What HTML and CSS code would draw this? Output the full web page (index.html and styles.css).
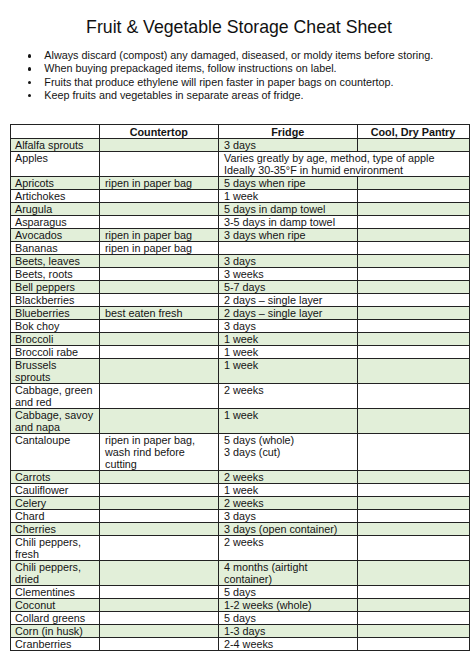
FILE: index.html
```html
<!DOCTYPE html>
<html lang="en">
<head>
<meta charset="utf-8">
<title>Fruit &amp; Vegetable Storage Cheat Sheet</title>
<link rel="stylesheet" href="styles.css">
</head>
<body>
<main class="sheet">
  <h1 class="title">Fruit &amp; Vegetable Storage Cheat Sheet</h1>
  <ul class="tips">
    <li>Always discard (compost) any damaged, diseased, or moldy items before storing.</li>
    <li>When buying prepackaged items, follow instructions on label.</li>
    <li>Fruits that produce ethylene will ripen faster in paper bags on countertop.</li>
    <li>Keep fruits and vegetables in separate areas of fridge.</li>
  </ul>
  <table class="chart">
    <colgroup>
      <col class="col-name">
      <col class="col-counter">
      <col class="col-fridge">
      <col class="col-pantry">
    </colgroup>
    <thead>
      <tr><th></th><th>Countertop</th><th>Fridge</th><th>Cool, Dry Pantry</th></tr>
    </thead>
    <tbody>
      <tr><td>Alfalfa sprouts</td><td></td><td>3 days</td><td></td></tr>
      <tr><td>Apples<br>&nbsp;</td><td></td><td colspan="2">Varies greatly by age, method, type of apple<br>Ideally 30-35°F in humid environment</td></tr>
      <tr><td>Apricots</td><td>ripen in paper bag</td><td>5 days when ripe</td><td></td></tr>
      <tr><td>Artichokes</td><td></td><td>1 week</td><td></td></tr>
      <tr><td>Arugula</td><td></td><td>5 days in damp towel</td><td></td></tr>
      <tr><td>Asparagus</td><td></td><td>3-5 days in damp towel</td><td></td></tr>
      <tr><td>Avocados</td><td>ripen in paper bag</td><td>3 days when ripe</td><td></td></tr>
      <tr><td>Bananas</td><td>ripen in paper bag</td><td></td><td></td></tr>
      <tr><td>Beets, leaves</td><td></td><td>3 days</td><td></td></tr>
      <tr><td>Beets, roots</td><td></td><td>3 weeks</td><td></td></tr>
      <tr><td>Bell peppers</td><td></td><td>5-7 days</td><td></td></tr>
      <tr><td>Blackberries</td><td></td><td>2 days – single layer</td><td></td></tr>
      <tr><td>Blueberries</td><td>best eaten fresh</td><td>2 days – single layer</td><td></td></tr>
      <tr><td>Bok choy</td><td></td><td>3 days</td><td></td></tr>
      <tr><td>Broccoli</td><td></td><td>1 week</td><td></td></tr>
      <tr><td>Broccoli rabe</td><td></td><td>1 week</td><td></td></tr>
      <tr><td>Brussels<br>sprouts</td><td></td><td>1 week</td><td></td></tr>
      <tr><td>Cabbage, green<br>and red</td><td></td><td>2 weeks</td><td></td></tr>
      <tr><td>Cabbage, savoy<br>and napa</td><td></td><td>1 week</td><td></td></tr>
      <tr><td>Cantaloupe</td><td>ripen in paper bag,<br>wash rind before<br>cutting</td><td>5 days (whole)<br>3 days (cut)</td><td></td></tr>
      <tr><td>Carrots</td><td></td><td>2 weeks</td><td></td></tr>
      <tr><td>Cauliflower</td><td></td><td>1 week</td><td></td></tr>
      <tr><td>Celery</td><td></td><td>2 weeks</td><td></td></tr>
      <tr><td>Chard</td><td></td><td>3 days</td><td></td></tr>
      <tr><td>Cherries</td><td></td><td>3 days (open container)</td><td></td></tr>
      <tr><td>Chili peppers,<br>fresh</td><td></td><td>2 weeks</td><td></td></tr>
      <tr><td>Chili peppers,<br>dried</td><td></td><td>4 months (airtight<br>container)</td><td></td></tr>
      <tr><td>Clementines</td><td></td><td>5 days</td><td></td></tr>
      <tr><td>Coconut</td><td></td><td>1-2 weeks (whole)</td><td></td></tr>
      <tr><td>Collard greens</td><td></td><td>5 days</td><td></td></tr>
      <tr><td>Corn (in husk)</td><td></td><td>1-3 days</td><td></td></tr>
      <tr><td>Cranberries</td><td></td><td>2-4 weeks</td><td></td></tr>
    </tbody>
  </table>
</main>
</body>
</html>
```

FILE: styles.css
```css
html, body {
  margin: 0;
  padding: 0;
  background: #ffffff;
}

body {
  color: #141414;
  font-family: "Liberation Sans", Arial, sans-serif;
}

.sheet {
  width: 459px;
  margin-left: 9.5px;
  padding-top: 17px;
}

.title {
  margin: 0;
  font-size: 17.7px;
  font-weight: normal;
  line-height: 20px;
  text-align: center;
  color: #111111;
}

.tips {
  list-style: none;
  margin: 12.4px 0 0;
  padding: 0;
  font-size: 10.8px;
  line-height: 13.1px;
}

.tips li {
  display: flex;
  align-items: flex-start;
}

.tips li::before {
  content: "";
  flex: none;
  width: 3.5px;
  height: 3.5px;
  margin: 5px 13.3px 0 18px;
  border-radius: 50%;
  background: #141414;
}

.chart {
  margin-top: 22.2px;
  width: 459px;
  table-layout: fixed;
  border-collapse: collapse;
  font-size: 10.8px;
  line-height: 12px;
}

.col-name { width: 89.5px; }
.col-counter { width: 119px; }
.col-fridge { width: 139px; }
.col-pantry { width: 111.5px; }

.chart th,
.chart td {
  border: 1px solid #222222;
  padding: 0 5px 0 4.5px;
  vertical-align: top;
  text-align: left;
  font-weight: normal;
}

.chart td:nth-child(n+2) {
  padding-left: 5px;
}

.chart th {
  padding-top: 1px;
  font-weight: bold;
  text-align: center;
}

.chart tbody tr:nth-child(odd) td {
  background: #e2efd9;
}
```
